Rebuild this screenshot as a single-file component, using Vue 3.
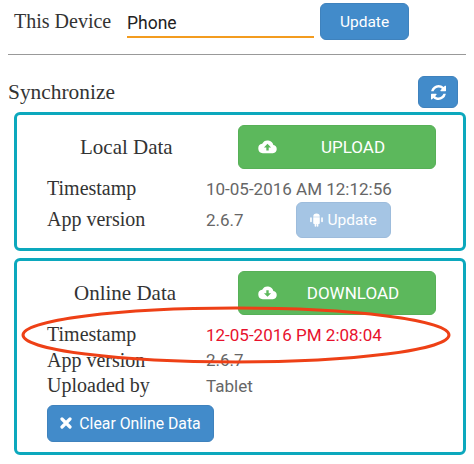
<template>
  <div class="page">
    <div class="device-row">
      <span class="device-label">This Device</span>
      <div class="device-input">Phone</div>
      <button class="btn btn-blue device-update">Update</button>
    </div>
    <hr class="divider" />

    <div class="sync-row">
      <span class="sync-title">Synchronize</span>
      <button class="btn btn-blue sync-btn" aria-label="Refresh">
        <svg viewBox="0 0 1536 1536" width="15" height="15">
          <path fill="#fff" d="M1511 928q0 5-1 7-64 268-268 434.500t-478 166.500q-146 0-282.500-55t-243.500-157l-129 129q-19 19-45 19t-45-19-19-45v-448q0-26 19-45t45-19h448q26 0 45 19t19 45-19 45l-137 137q71 66 161 102t187 36q134 0 250-65t186-179q11-17 53-117 8-23 30-23h192q13 0 22.500 9.500t9.500 22.500zm25-800v448q0 26-19 45t-45 19h-448q-26 0-45-19t-19-45 19-45l138-138q-148-137-349-137-134 0-250 65t-186 179q-11 17-53 117-8 23-30 23h-199q-13 0-22.500-9.500t-9.500-22.500v-7q65-268 270-434.500t480-166.500q146 0 284 55.500t245 156.500l130-129q19-19 45-19t45 19 19 45z"/>
        </svg>
      </button>
    </div>

    <section class="panel local">
      <div class="panel-head">
        <span class="panel-title">Local Data</span>
        <button class="btn btn-green action">
          <svg class="cloud" viewBox="0 0 24 18" width="19" height="15">
            <path fill="#fff" d="M19.400 7.200A7.500 7.500 0 0 0 5.300 5.600 6 6 0 0 0 6 17.500h12.800a5.200 5.200 0 0 0 .6-10.300z"/>
            <path fill="#5cb85c" d="M12 5.500l4.500 4.700h-3v3.800h-3v-3.800h-3z"/>
          </svg>
          <span class="action-text">UPLOAD</span>
        </button>
      </div>
      <div class="rows">
        <div class="info-row">
          <span class="info-key">Timestamp</span>
          <span class="info-val">10-05-2016 AM 12:12:56</span>
        </div>
        <div class="info-row">
          <span class="info-key">App version</span>
          <span class="info-val short">2.6.7</span>
          <button class="btn app-update">
            <svg viewBox="0 0 16 18" width="13" height="15">
              <path fill="#fff" d="M4 5.500a4 4 0 0 1 8 0zM4 6.300h8v7.200a1 1 0 0 1-1 1h-.7V17a1 1 0 0 1-2 0v-2.500H7.700V17a1 1 0 0 1-2 0v-2.500H5a1 1 0 0 1-1-1zM1.200 6.300a1 1 0 0 1 1 1v4.200a1 1 0 0 1-2 0V7.300a1 1 0 0 1 1-1zM14.800 6.300a1 1 0 0 1 1 1v4.200a1 1 0 0 1-2 0V7.300a1 1 0 0 1 1-1z"/>
            </svg>
            Update
          </button>
        </div>
      </div>
    </section>

    <section class="panel online">
      <div class="panel-head">
        <span class="panel-title online-title">Online Data</span>
        <button class="btn btn-green action">
          <svg class="cloud" viewBox="0 0 24 18" width="19" height="15">
            <path fill="#fff" d="M19.400 7.200A7.500 7.500 0 0 0 5.300 5.600 6 6 0 0 0 6 17.500h12.800a5.200 5.200 0 0 0 .6-10.300z"/>
            <path fill="#5cb85c" d="M12 14.500l-4.500-4.700h3V6h3v3.800h3z"/>
          </svg>
          <span class="action-text">DOWNLOAD</span>
        </button>
      </div>
      <div class="rows rows-online">
        <div class="info-row tight">
          <span class="info-key">Timestamp</span>
          <span class="info-val red">12-05-2016 PM 2:08:04</span>
        </div>
        <div class="info-row tight">
          <span class="info-key">App version</span>
          <span class="info-val">2.6.7</span>
        </div>
        <div class="info-row tight">
          <span class="info-key">Uploaded by</span>
          <span class="info-val">Tablet</span>
        </div>
      </div>
      <button class="btn btn-blue clear-btn">
        <svg viewBox="0 0 12 12" width="12" height="12">
          <path fill="none" stroke="#fff" stroke-width="3.200" stroke-linecap="round" d="M2 2l8 8M10 2l-8 8"/>
        </svg>
        Clear Online Data
      </button>
    </section>

    <!-- hand-drawn annotation over the timestamp row -->
    <svg class="annotation" viewBox="0 0 474 464" width="474" height="464">
      <ellipse cx="236" cy="335" rx="213" ry="27" fill="none" stroke="#ee4016" stroke-width="3"/>
    </svg>
  </div>
</template>

<script setup>
</script>

<style>
html, body { margin: 0; background: #fff; }
</style>

<style scoped>
.page {
  position: relative;
  width: 474px;
  height: 464px;
  overflow: hidden;
  box-sizing: border-box;
  padding: 3px 8px 0;
  font-family: "Roboto", "Liberation Sans", sans-serif;
  background: #fff;
}

.btn {
  border: 1px solid transparent;
  border-radius: 6px;
  color: #fff;
  font-family: inherit;
  cursor: pointer;
  padding: 0;
  display: flex;
  align-items: center;
  justify-content: center;
}
.btn-blue { background: #428bca; border-color: #3f82bd; }
.btn-green { background: #5cb85c; border-color: #57b057; }

.device-row {
  display: flex;
  align-items: center;
  height: 37px;
  padding-left: 6px;
}
.device-label {
  width: 113px;
  font-family: "Liberation Serif", serif;
  font-size: 20px;
  color: #333;
}
.device-input {
  box-sizing: border-box;
  width: 187px;
  height: 33px;
  line-height: 36px;
  font-size: 17.5px;
  color: #222;
  border-bottom: 2.5px solid #f39c1f;
}
.device-update {
  width: 89px;
  height: 37px;
  margin-left: 6px;
  font-size: 15.5px;
}

.divider {
  margin: 14px 0 0;
  border: 0;
  border-top: 1px solid #999;
}

.sync-row {
  display: flex;
  align-items: center;
  justify-content: space-between;
  height: 32px;
  margin-top: 21px;
  padding-right: 8px;
}
.sync-title {
  font-family: "Liberation Serif", serif;
  font-size: 21.4px;
  color: #333;
}
.sync-btn { width: 40px; height: 32px; }

.panel {
  box-sizing: border-box;
  margin-left: 6px;
  width: 452px;
  border: 3px solid #0ca8bd;
  border-radius: 6px;
  padding: 10px 0 0 30px;
}
.local { height: 139px; margin-top: 4px; }
.online { height: 197px; margin-top: 7px; }

.panel-head {
  display: flex;
  align-items: center;
  height: 44px;
}
.panel-title {
  width: 191px;
  padding-left: 33px;
  box-sizing: border-box;
  font-family: "Liberation Serif", serif;
  font-size: 21px;
  color: #333;
}
.online-title { padding-left: 27px; }
.action {
  width: 198px;
  height: 44px;
  position: relative;
  font-size: 17px;
}
.cloud { position: absolute; left: 19px; top: 13px; }
.action-text { margin-left: 32px; }

.rows { margin-top: 4px; }
.rows-online { margin-top: 7px; }

.info-row {
  display: flex;
  align-items: center;
  height: 31px;
  font-size: 17px;
}
.info-row.tight { height: 25.5px; }
.info-key {
  width: 159px;
  font-family: "Liberation Serif", serif;
  font-size: 20px;
  color: #333;
}
.info-val { color: #666; }
.info-val.red { color: #e8112d; }
.info-val.short { width: 90px; }
.app-update {
  width: 95px;
  height: 36px;
  gap: 4px;
  font-size: 15.5px;
  background: #a5c5e4;
  border-color: #9dbcdc;
}
.clear-btn {
  width: 167px;
  height: 37px;
  margin-top: 6px;
  gap: 7px;
  font-size: 15.8px;
}

.annotation {
  position: absolute;
  left: 0;
  top: 0;
  pointer-events: none;
}
</style>
